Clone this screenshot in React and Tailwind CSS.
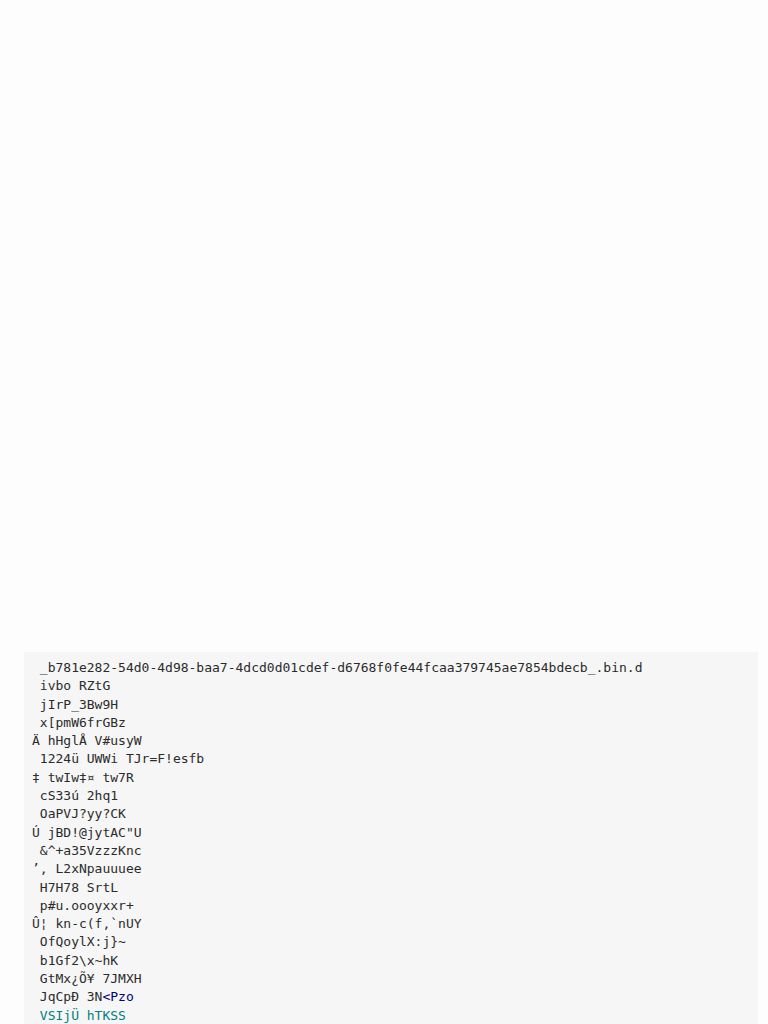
import React from 'react';

const lines = [
  [' _b781e282-54d0-4d98-baa7-4dcd0d01cdef-d6768f0fe44fcaa379745ae7854bdecb_.bin.d'],
  [' ivbo RZtG'],
  [' jIrP_3Bw9H'],
  [' x[pmW6frGBz'],
  ['Ä hHglÅ V#usyW'],
  [' 1224ü UWWi TJr=F!esfb'],
  ['‡ twIw‡¤ tw7R'],
  [' cS33ú 2hq1'],
  [' OaPVJ?yy?CK'],
  ['Ú jBD!@jytAC"U'],
  [' &^+a35VzzzKnc'],
  ['’, L2xNpauuuee'],
  [' H7H78 SrtL'],
  [' p#u.oooyxxr+'],
  ['Û¦ kn-c(f,`nUY'],
  [' OfQoylX:j}~'],
  [' b1Gf2\\x~hK'],
  [' GtMx¿Õ¥ 7JMXH'],
];

const App = () => {
  return (
    <div className="min-h-screen bg-[#fdfdfd] overflow-hidden">
      <div className="h-[652px]" />
      <div className="ml-6 w-[734px] bg-[#f6f6f6] pl-2 pt-[7px] pb-6">
        <pre className="font-['DejaVu_Sans_Mono',monospace] text-[13px] leading-[18.3px] text-[#2b2b2b] whitespace-pre m-0">
          {lines.map((l, i) => (
            <div key={i}>{l[0]}</div>
          ))}
          <div>
            {' JqCpÐ 3N'}
            <span className="text-[#000080]">{'<Pzo'}</span>
          </div>
          <div className="text-[#008080]">{' VSIjÜ hTKSS'}</div>
          <div>{' '}</div>
        </pre>
      </div>
    </div>
  );
};

export default App;
